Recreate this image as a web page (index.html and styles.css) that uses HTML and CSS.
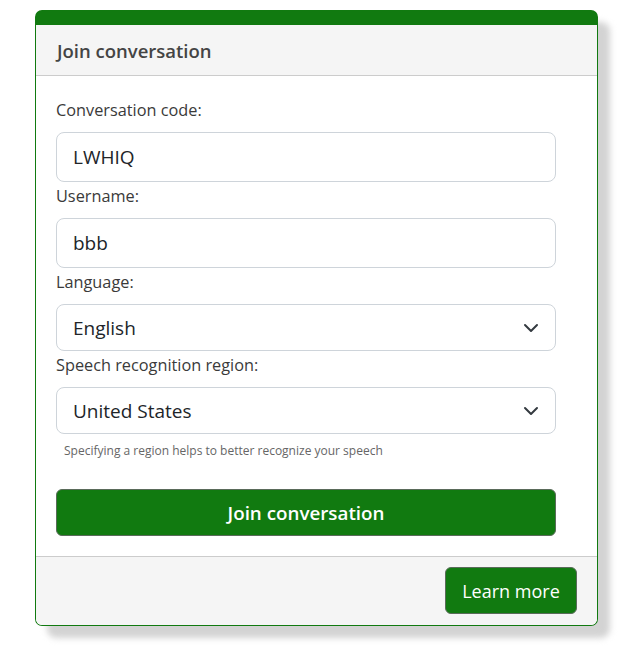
FILE: index.html
```html
<!DOCTYPE html>
<html>
<head>
<meta charset="utf-8">
<link rel="stylesheet" href="styles.css">
</head>
<body>
<div class="page">
  <div class="card">
    <div class="card-header">Join conversation</div>
    <div class="card-body">
      <form class="form">
        <label class="label">Conversation code:</label>
        <div class="input">LWHIQ</div>
        <label class="label">Username:</label>
        <div class="input">bbb</div>
        <label class="label">Language:</label>
        <div class="select"><span>English</span>
          <svg class="chev" viewBox="0 0 16 16" width="16" height="16"><path d="M2 5l6 6 6-6" fill="none" stroke="#343a40" stroke-width="2" stroke-linecap="round" stroke-linejoin="round"/></svg>
        </div>
        <label class="label">Speech recognition region:</label>
        <div class="select"><span>United States</span>
          <svg class="chev" viewBox="0 0 16 16" width="16" height="16"><path d="M2 5l6 6 6-6" fill="none" stroke="#343a40" stroke-width="2" stroke-linecap="round" stroke-linejoin="round"/></svg>
        </div>
        <div class="hint">Specifying a region helps to better recognize your speech</div>
        <button type="button" class="btn btn-block">Join conversation</button>
      </form>
    </div>
    <div class="card-footer">
      <button type="button" class="btn btn-small">Learn more</button>
    </div>
  </div>
</div>
</body>
</html>
```

FILE: styles.css
```css
* { box-sizing: border-box; }
html, body { margin: 0; padding: 0; background: #fff; }
body { font-family: "Open Sans", "Noto Sans", sans-serif; color: #333; min-height: 660px; }
.page { padding: 10px 0 40px 35px; position: relative; z-index: 0; }
.card {
  position: relative;
  width: 563px;
  border: 1px solid #117a10;
  border-top: 15px solid #117a10;
  border-radius: 7px;
  background: #fff;
}
.card::before {
  content: "";
  position: absolute;
  top: -15px; left: -1px; right: -1px; bottom: -1px;
  transform: translate(12px, 12px);
  background: #d3d3d3;
  border-radius: 9px;
  filter: blur(3px);
  z-index: -1;
}
.card-header {
  background: #f5f5f5;
  border-bottom: 1px solid #cccccc;
  height: 51px;
  padding: 0 21px;
  display: flex;
  align-items: center;
  font-size: 18.5px;
  font-weight: 600;
  color: #444;
}
.card-body { padding: 20px; }
.form { width: 500px; display: flex; flex-direction: column; }
.label { font-size: 16.3px; line-height: 24px; color: #3a3a3a; margin-top: 2px; margin-bottom: 10px; }
.input, .select {
  border: 1px solid #ced4da;
  border-radius: 8px;
  padding: 0 16px;
  font-size: 19px;
  color: #212529;
  display: flex;
  align-items: center;
}
.input { height: 50px; }
.select { height: 47px; justify-content: space-between; padding-right: 16px; }
.chev { width: 16px; height: 16px; }
.hint { font-size: 12px; color: #666; padding-left: 8px; margin-top: 8px; line-height: 18px; }
.btn {
  background: #117a10;
  color: #fff;
  border: 1px solid #5a6b5a;
  border-radius: 6px;
  font-family: inherit;
  font-size: 18px;
  font-weight: 600;
  cursor: pointer;
}
.btn-block { width: 500px; height: 47px; margin-top: 29px; font-size: 18.8px; }
.card-footer {
  background: #f5f5f5;
  border-top: 1px solid #cccccc;
  border-radius: 0 0 6px 6px;
  padding: 10px 20px 11px 20px;
  display: flex;
  justify-content: flex-end;
}
.btn-small { width: 132px; height: 47px; font-weight: 400; }
```
